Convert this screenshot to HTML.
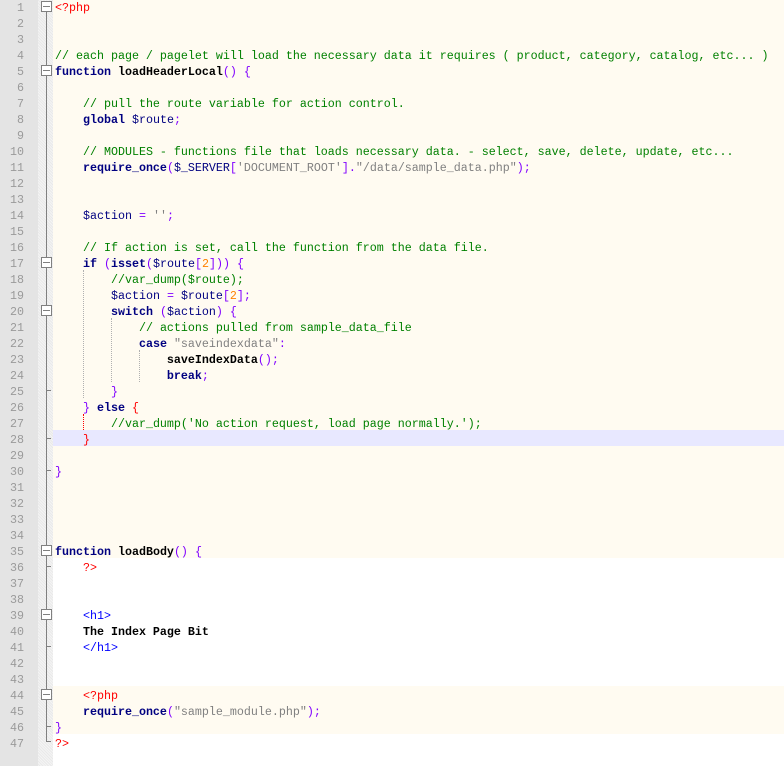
<!DOCTYPE html>
<html><head><meta charset="utf-8">
<style>
html,body{margin:0;padding:0;width:784px;height:766px;overflow:hidden;background:#fff;}
#g{position:absolute;left:0;top:0;width:38px;height:766px;background:#e4e4e4;}
#f{position:absolute;left:38px;top:0;width:15px;height:766px;background:repeating-linear-gradient(45deg,#f4f4f4 0 1px,#e9e9e9 1px 2px);}
.bg{position:absolute;left:53px;right:0;}
.ln{position:absolute;left:0;width:24px;text-align:right;font:11.67px "Liberation Mono",monospace;color:#9a9a9a;height:16px;line-height:16px;transform:translateY(2px);}
.l{position:absolute;left:55px;white-space:pre;font:11.67px "Liberation Mono",monospace;height:16px;line-height:16px;color:#000;transform:translateY(2px);}
.c{color:#008000}
.k{color:#000080;font-weight:bold}
.v{color:#000080}
.o{color:#8000ff}
.s{color:#808080}
.n{color:#ff8000}
.t{color:#ff0000}
.h{color:#0000ff}
.b{font-weight:bold}
.box{position:absolute;left:41px;width:11px;height:11px;border:1px solid #808080;background:#fff;box-sizing:border-box;}
.box:after{content:"";position:absolute;left:1px;top:4px;width:7px;height:1px;background:#808080;}
.vl{position:absolute;left:46px;width:1px;background:#808080;}
.tk{position:absolute;left:46px;width:5px;height:1px;background:#808080;}
.ig{position:absolute;width:0;border-left:1px dotted #b0b0b0;}
</style></head><body>
<div id="g"></div><div id="f"></div>
<div class="bg" style="top:-2px;height:560px;background:#fffbf1"></div>
<div class="bg" style="top:686px;height:48px;background:#fffbf1"></div>
<div class="bg" style="top:430px;height:16px;background:#e8e8ff"></div>

<div class="vl" style="top:6px;height:736px"></div>
<div class="tk" style="top:741px"></div>
<div class="tk" style="top:390px"></div>
<div class="tk" style="top:438px"></div>
<div class="tk" style="top:470px"></div>
<div class="tk" style="top:566px"></div>
<div class="tk" style="top:646px"></div>
<div class="tk" style="top:726px"></div>
<div class="box" style="top:1px"></div>
<div class="box" style="top:65px"></div>
<div class="box" style="top:257px"></div>
<div class="box" style="top:305px"></div>
<div class="box" style="top:545px"></div>
<div class="box" style="top:609px"></div>
<div class="box" style="top:689px"></div>

<div class="ig" style="left:83px;top:270px;height:128px"></div>
<div class="ig" style="left:83px;top:414px;height:16px;border-left-color:#ff0000"></div>
<div class="ig" style="left:111px;top:318px;height:64px"></div>
<div class="ig" style="left:139px;top:350px;height:32px"></div>

<div class="ln" style="top:-2px">1</div><div class="ln" style="top:14px">2</div><div class="ln" style="top:30px">3</div><div class="ln" style="top:46px">4</div><div class="ln" style="top:62px">5</div><div class="ln" style="top:78px">6</div><div class="ln" style="top:94px">7</div><div class="ln" style="top:110px">8</div><div class="ln" style="top:126px">9</div><div class="ln" style="top:142px">10</div><div class="ln" style="top:158px">11</div><div class="ln" style="top:174px">12</div><div class="ln" style="top:190px">13</div><div class="ln" style="top:206px">14</div><div class="ln" style="top:222px">15</div><div class="ln" style="top:238px">16</div><div class="ln" style="top:254px">17</div><div class="ln" style="top:270px">18</div><div class="ln" style="top:286px">19</div><div class="ln" style="top:302px">20</div><div class="ln" style="top:318px">21</div><div class="ln" style="top:334px">22</div><div class="ln" style="top:350px">23</div><div class="ln" style="top:366px">24</div><div class="ln" style="top:382px">25</div><div class="ln" style="top:398px">26</div><div class="ln" style="top:414px">27</div><div class="ln" style="top:430px">28</div><div class="ln" style="top:446px">29</div><div class="ln" style="top:462px">30</div><div class="ln" style="top:478px">31</div><div class="ln" style="top:494px">32</div><div class="ln" style="top:510px">33</div><div class="ln" style="top:526px">34</div><div class="ln" style="top:542px">35</div><div class="ln" style="top:558px">36</div><div class="ln" style="top:574px">37</div><div class="ln" style="top:590px">38</div><div class="ln" style="top:606px">39</div><div class="ln" style="top:622px">40</div><div class="ln" style="top:638px">41</div><div class="ln" style="top:654px">42</div><div class="ln" style="top:670px">43</div><div class="ln" style="top:686px">44</div><div class="ln" style="top:702px">45</div><div class="ln" style="top:718px">46</div><div class="ln" style="top:734px">47</div>

<div class="l" style="top:-2px"><span class="t">&lt;?php</span></div>
<div class="l" style="top:46px"><span class="c">// each page / pagelet will load the necessary data it requires ( product, category, catalog, etc... )</span></div>
<div class="l" style="top:62px"><span class="k">function</span> <span class="b">loadHeaderLocal</span><span class="o">()</span> <span class="o">{</span></div>
<div class="l" style="top:94px">    <span class="c">// pull the route variable for action control.</span></div>
<div class="l" style="top:110px">    <span class="k">global</span> <span class="v">$route</span><span class="o">;</span></div>
<div class="l" style="top:142px">    <span class="c">// MODULES - functions file that loads necessary data. - select, save, delete, update, etc...</span></div>
<div class="l" style="top:158px">    <span class="k">require_once</span><span class="o">(</span><span class="v">$_SERVER</span><span class="o">[</span><span class="s">'DOCUMENT_ROOT'</span><span class="o">].</span><span class="s">"/data/sample_data.php"</span><span class="o">);</span></div>
<div class="l" style="top:206px">    <span class="v">$action</span> <span class="o">=</span> <span class="s">''</span><span class="o">;</span></div>
<div class="l" style="top:238px">    <span class="c">// If action is set, call the function from the data file.</span></div>
<div class="l" style="top:254px">    <span class="k">if</span> <span class="o">(</span><span class="k">isset</span><span class="o">(</span><span class="v">$route</span><span class="o">[</span><span class="n">2</span><span class="o">]))</span> <span class="o">{</span></div>
<div class="l" style="top:270px">        <span class="c">//var_dump($route);</span></div>
<div class="l" style="top:286px">        <span class="v">$action</span> <span class="o">=</span> <span class="v">$route</span><span class="o">[</span><span class="n">2</span><span class="o">];</span></div>
<div class="l" style="top:302px">        <span class="k">switch</span> <span class="o">(</span><span class="v">$action</span><span class="o">)</span> <span class="o">{</span></div>
<div class="l" style="top:318px">            <span class="c">// actions pulled from sample_data_file</span></div>
<div class="l" style="top:334px">            <span class="k">case</span> <span class="s">"saveindexdata"</span><span class="o">:</span></div>
<div class="l" style="top:350px">                <span class="b">saveIndexData</span><span class="o">();</span></div>
<div class="l" style="top:366px">                <span class="k">break</span><span class="o">;</span></div>
<div class="l" style="top:382px">        <span class="o">}</span></div>
<div class="l" style="top:398px">    <span class="o">}</span> <span class="k">else</span> <span class="t">{</span></div>
<div class="l" style="top:414px">        <span class="c">//var_dump('No action request, load page normally.');</span></div>
<div class="l" style="top:430px">    <span class="t">}</span></div>
<div class="l" style="top:462px"><span class="o">}</span></div>
<div class="l" style="top:542px"><span class="k">function</span> <span class="b">loadBody</span><span class="o">()</span> <span class="o">{</span></div>
<div class="l" style="top:558px">    <span class="t">?&gt;</span></div>
<div class="l" style="top:606px">    <span class="h">&lt;h1&gt;</span></div>
<div class="l" style="top:622px">    <span class="b">The Index Page Bit</span></div>
<div class="l" style="top:638px">    <span class="h">&lt;/h1&gt;</span></div>
<div class="l" style="top:686px">    <span class="t">&lt;?php</span></div>
<div class="l" style="top:702px">    <span class="k">require_once</span><span class="o">(</span><span class="s">"sample_module.php"</span><span class="o">);</span></div>
<div class="l" style="top:718px"><span class="o">}</span></div>
<div class="l" style="top:734px"><span class="t">?&gt;</span></div>
</body></html>
